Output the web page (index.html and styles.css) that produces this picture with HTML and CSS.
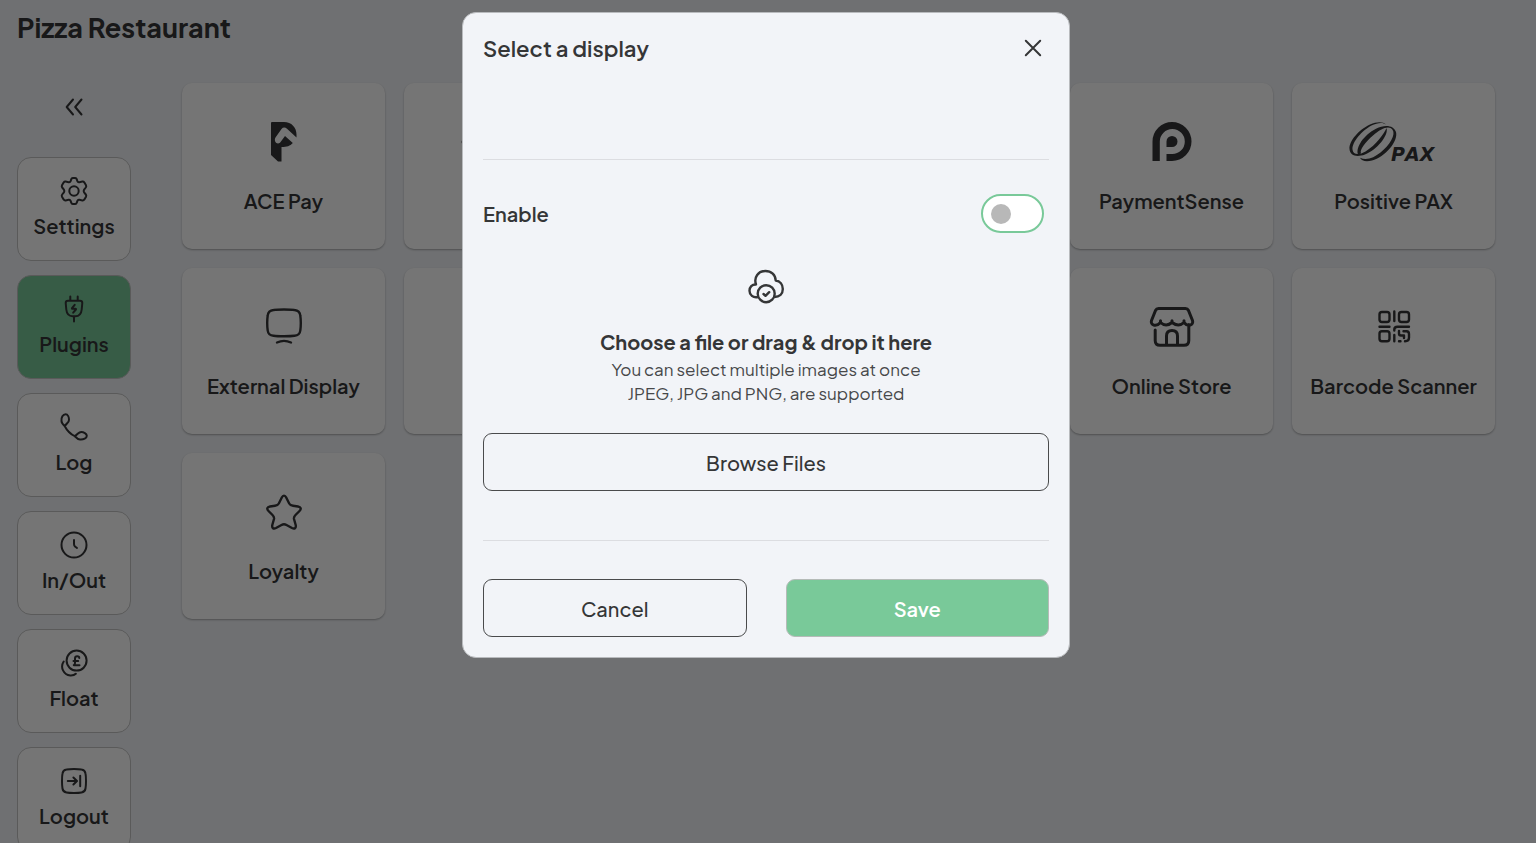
FILE: index.html
```html
<!DOCTYPE html>
<html lang="en">
<head>
<meta charset="utf-8">
<meta name="viewport" content="width=device-width, initial-scale=1">
<title>Pizza Restaurant</title>
<link rel="stylesheet" href="styles.css">
</head>
<body>
<div class="app">
  <header class="topbar"><h1 class="brand">Pizza Restaurant</h1></header>
  <div class="layout">
    <nav class="sidebar" aria-label="Main">
      <button class="collapse" type="button" aria-label="Collapse menu">
        <svg class="icon" width="20" height="20" viewBox="0 0 20 20"><path d="M9 2.500 2.700 10 9 17.500M17.500 2.500 11.200 10 17.500 17.500"/></svg>
      </button>
      <button class="nav-item" type="button">
        <svg class="icon" width="28" height="28" viewBox="0 0 28 28"><path d="M11.300 2.200Q11.600 1 12.800 1h2.400Q16.400 1 16.700 2.200L17.400 4.200Q17.900 5.500 19.300 5.200L22.400 4.600Q23.600 4.400 24.400 5.600L26 8.300Q26.600 9.500 25.800 10.500L24.100 12.600Q23.200 14 24.100 15.400L25.800 17.500Q26.600 18.500 26 19.700L24.400 22.400Q23.600 23.600 22.400 23.400L19.300 22.800Q17.900 22.500 17.400 23.800L16.700 25.800Q16.400 27 15.200 27H12.800Q11.600 27 11.300 25.800L10.600 23.800Q10.100 22.500 8.700 22.800L5.600 23.400Q4.400 23.600 3.600 22.400L2 19.700Q1.400 18.500 2.200 17.500L3.900 15.400Q4.800 14 3.900 12.600L2.200 10.500Q1.400 9.500 2 8.300L3.600 5.600Q4.400 4.400 5.600 4.600L8.700 5.200Q10.100 5.500 10.600 4.200Z"/><circle cx="14" cy="14" r="4.700"/></svg>
        <span>Settings</span>
      </button>
      <button class="nav-item nav-item-active" type="button" aria-current="page">
        <svg class="icon" width="28" height="28" viewBox="0 0 28 28"><path d="M10.300 1.500V5.500M17.700 1.500V5.500M14 21.500V26.500M8 5.800H20Q22.300 5.800 22.300 8L21.700 14.500Q21 21.200 15.500 21.200H12.500Q7 21.200 6.300 14.500L5.700 8Q5.700 5.800 8 5.800ZM14.700 9.800 12 13.200Q11.700 13.800 12.500 13.800H15.500Q16.300 13.800 15.900 14.500L13.200 17.700"/></svg>
        <span>Plugins</span>
      </button>
      <button class="nav-item" type="button">
        <svg class="icon" width="28" height="28" viewBox="0 0 28 28"><path d="M1.500 8C1 4.500 3 1.200 5.500 1.200C8 1.200 9 4.500 9 6.700C9 9.500 7 9.800 4.800 13.200C1.900 10.600 1.500 9.500 1.500 8ZM4.800 13.200C7 17.500 10.500 21 14.800 23.200C18.200 21 18.500 19 21.300 19C23.500 19 26.800 20.500 26.800 22.700C26.800 25.200 23.500 26.800 20 26.500C18 26.300 16.500 25 14.800 23.200"/></svg>
        <span>Log</span>
      </button>
      <button class="nav-item" type="button">
        <svg class="icon" width="28" height="28" viewBox="0 0 28 28"><circle cx="14" cy="14" r="12.500"/><path d="M14 9V13Q14 14.500 15 15.500L17 17"/></svg>
        <span>In/Out</span>
      </button>
      <button class="nav-item" type="button">
        <svg class="icon" width="28" height="28" viewBox="0 0 28 28"><circle cx="16.600" cy="11.600" r="10"/><path d="M3.700 12.500A9 9 0 0 0 10.300 26.500Q14 26.700 15.800 24.800M19.300 9Q19.300 7.200 17.200 7.200Q15 7.200 15 9.400V14Q15 15.700 13.800 16.200H19.500M13.500 11.900H18.200"/></svg>
        <span>Float</span>
      </button>
      <button class="nav-item" type="button">
        <svg class="icon" width="28" height="28" viewBox="0 0 28 28"><path d="M14 2Q19 2 21.500 2.500Q25 3 25.500 6.500Q26 9 26 14T25.500 21.500Q25 25 21.500 25.500Q19 26 14 26T6.500 25.500Q3 25 2.500 21.500Q2 19 2 14T2.500 6.500Q3 3 6.500 2.500Q9 2 14 2ZM7.800 14H16.500M13.400 10.500 17 14 13.400 17.500M20.200 8.800V19.200"/></svg>
        <span>Logout</span>
      </button>
    </nav>
    <main class="plugins">
      <button class="card" type="button">
        <svg class="logo" width="48" height="48" viewBox="0 0 48 48"><path d="M12 4H24C31.500 4 36.500 9.500 36.500 16.500V19.500L27 10.800C25 9 23 9.300 21.500 11L15.500 19.500C13.500 23 16.500 27 20 24.800L25 18L32.800 25C30 28 27 29 21.500 29V43.500H18L11 37V5Q11 4 12 4Z"/></svg>
        <span>ACE Pay</span>
      </button>
      <button class="card" type="button" aria-label="Plugin">
        <svg class="icon icon-bold" width="92" height="48" viewBox="0 0 92 48"><ellipse cx="46" cy="24" rx="43" ry="12"/></svg>
      </button>
      <button class="card" type="button" aria-label="Plugin"></button>
      <button class="card" type="button" aria-label="Plugin"></button>
      <button class="card" type="button">
        <svg class="logo" width="48" height="48" viewBox="0 0 48 48"><path d="M4.500 43V23.500A19.500 19.500 0 1 1 24 43H18.500V36H24A12.500 12.500 0 1 0 11.800 23.500V43ZM18.500 29V23.500A5.500 5.500 0 1 1 24 29Z"/></svg>
        <span>PaymentSense</span>
      </button>
      <button class="card" type="button">
        <svg class="logo" width="92" height="48" viewBox="0 0 92 48"><path d="M38 6.500C35 3.500 29 3.200 22 6.500C11 11.500 1 23 1.500 31C2 38 9 39.500 17 36.500C29 32 41 17 38.500 10C36 16 28 27 17.500 33.500C11 37.300 5 37 4.500 31.500C4 24 14 12.500 23.500 7.500C29.500 4.500 35 4 38 6.500Z"/><path d="M10 36.500C7.500 29 16 17 28 10.800C37 6 46 7.500 48 14C50.500 23.500 37 39 24 42.500C18 44 13.500 43 12 39.800C19 43 26 39.500 32.500 34.500C42 27 48 16.500 44.500 11.800C41 7 33 10.500 25 17.500C17 24.500 11.500 31.500 13 35.500Z"/><text class="logo-word" x="43" y="43">PAX</text></svg>
        <span>Positive PAX</span>
      </button>
      <button class="card" type="button">
        <svg class="icon icon-medium" width="48" height="48" viewBox="0 0 48 48"><path d="M24 6.500Q31 6.500 34.500 7Q39.800 7.500 40.300 12.500Q40.800 16 40.800 20T40.300 27.500Q39.800 32.300 34.500 32.800Q31 33.300 24 33.300T13.500 32.800Q8.200 32.300 7.700 27.500Q7.200 24 7.200 20T7.700 12.500Q8.200 7.500 13.500 7Q17 6.500 24 6.500ZM17 39.500Q24 36.200 31 39.500"/></svg>
        <span>External Display</span>
      </button>
      <button class="card" type="button" aria-label="Plugin"></button>
      <button class="card" type="button" aria-label="Plugin"></button>
      <button class="card" type="button" aria-label="Plugin"></button>
      <button class="card" type="button">
        <svg class="icon icon-bold" width="48" height="48" viewBox="0 0 48 48"><path d="M7.200 27V37.500Q7.200 42.300 12 42.300H36Q40.800 42.300 40.800 37.500V21.500M18.500 42V33Q18.500 27.500 24 27.500T29.500 33V42M10.500 5.500H37.500Q39.500 5.500 40.500 7.500L44.500 17.500C46 22 40 24.500 36 19.500Q30.500 24.500 24 19.500Q18 24.500 12.500 19.500C8 24.500 2 22 3.500 17.500L7.500 7.500Q8.500 5.500 10.500 5.500ZM12.500 17.700V19.500M24 17.700V19.500M36 17.700V19.500"/></svg>
        <span>Online Store</span>
      </button>
      <button class="card" type="button">
        <svg class="icon icon-medium" width="48" height="48" viewBox="0 0 48 48"><rect x="9.500" y="9" width="10" height="10" rx="2.500"/><rect x="29" y="9" width="10" height="10" rx="2.500"/><rect x="9.500" y="28.200" width="10" height="10" rx="2.500"/><path d="M24.300 8.500V18M9.500 23.700H19.500M24.300 27.500V26.500Q24.300 23.700 27.500 23.700H39M24.300 32V38.200M29 28V30.500Q29 32.500 31 32.500H34V35M33.500 28.300H36.500Q39 28.300 39 31V34.500Q39 38.200 35 38.200M29 38.200H30.500"/></svg>
        <span>Barcode Scanner</span>
      </button>
      <button class="card" type="button">
        <svg class="icon icon-medium" width="48" height="48" viewBox="0 0 48 48"><path d="M21.800 9.500C23 7 25 7 26.200 9.500L29.200 15.500C30 17 31 17.500 33 17.700L38 18.500C41 19 41.500 21 39.500 23L35.500 27C34 28.500 33.700 29.500 34 31L35.700 37C36.300 40.300 34.500 41.200 32 40L26.500 37C24.700 36 23.300 36 21.500 37L16 40C13.500 41.200 11.700 40.300 12.300 37L14 31C14.300 29.500 14 28.500 12.500 27L8.500 23C6.500 21 7 19 10 18.500L15 17.700C17 17.500 18 17 18.800 15.500Z"/></svg>
        <span>Loyalty</span>
      </button>
    </main>
  </div>
</div>

<div class="overlay">
  <form class="modal" role="dialog" aria-modal="true" aria-labelledby="modal-title">
    <div class="modal-head">
      <h2 class="modal-title" id="modal-title">Select a display</h2>
      <button class="close" type="button" aria-label="Close">
        <svg class="icon" width="18" height="18" viewBox="0 0 18 18"><path d="M1.800 1.800 16.200 16.200M16.200 1.800 1.800 16.200"/></svg>
      </button>
    </div>
    <div class="enable-row">
      <label class="enable-label" for="enable">Enable</label>
      <input class="toggle" id="enable" type="checkbox" role="switch">
    </div>
    <div class="dropzone">
      <svg class="icon icon-medium" width="36" height="36" viewBox="0 0 36 36"><circle cx="18.200" cy="24.700" r="8.500"/><path d="M10 28C5 29 1.500 26 1.500 21.800C1.500 18 4 15.300 8 15.500C5.500 8 10.500 2 17.300 2C23.500 2 27.500 6 27.700 11.500C32 12 34.800 15.500 34.800 20C34.800 25 31.500 28 26.400 28M15.500 25 17.500 26.800 21.200 23.200"/></svg>
      <p class="drop-title">Choose a file or drag &amp; drop it here</p>
      <p class="drop-note">You can select multiple images at once<br>JPEG, JPG and PNG, are supported</p>
      <button class="btn btn-wide" type="button">Browse Files</button>
    </div>
    <div class="modal-foot">
      <button class="btn" type="button">Cancel</button>
      <button class="btn btn-primary" type="submit">Save</button>
    </div>
  </form>
</div>
</body>
</html>
```
FILE: styles.css
```css
:root {
  --ink: #353637;
  --page: #f2f4f8;
  --green: #79c999;
}

* {
  box-sizing: border-box;
}

body {
  margin: 0;
  background: var(--page);
  color: var(--ink);
  font-family: "Plus Jakarta Sans", Inter, "Open Sans", sans-serif;
  font-size: 20px;
}

button {
  padding: 0;
  border: 0;
  background: none;
  color: inherit;
  font: inherit;
  cursor: pointer;
}

h1, h2, p {
  margin: 0;
}

.app {
  height: 100vh;
  overflow: hidden;
}

.topbar {
  padding: 9px 17px 11px;
}

.brand {
  font-size: 27px;
  line-height: 36px;
  font-weight: 700;
}

.layout {
  display: flex;
  gap: 51px;
  padding: 27px 41px 0 17px;
}

.sidebar {
  flex: none;
  width: 114px;
  display: flex;
  flex-direction: column;
  gap: 14px;
}

.collapse {
  display: grid;
  place-items: center;
  height: 48px;
  margin-bottom: 12px;
}

.nav-item {
  display: flex;
  flex-direction: column;
  align-items: center;
  gap: 9px;
  padding: 19px 0 22px;
  border: 1px solid #c4c4c4;
  border-radius: 14px;
  background: #fff;
  font-weight: 600;
  line-height: 24px;
}

.nav-item-active {
  background: var(--green);
}

.plugins {
  flex: 1;
  display: grid;
  grid-template-columns: repeat(6, minmax(0, 1fr));
  grid-auto-rows: 166px;
  gap: 19px;
}

.card {
  display: flex;
  flex-direction: column;
  align-items: center;
  gap: 21px;
  padding-top: 35px;
  border-radius: 10px;
  background: #fff;
  box-shadow: 0 1px 2px rgba(0, 0, 0, .3);
  font-weight: 600;
  line-height: 28px;
}

.icon {
  display: block;
  fill: none;
  stroke: currentColor;
  stroke-width: 2;
  stroke-linecap: round;
  stroke-linejoin: round;
}

.icon-medium {
  stroke-width: 2.4;
}

.icon-bold {
  stroke-width: 3;
}

.logo {
  display: block;
  fill: currentColor;
  overflow: visible;
}

.logo-word {
  font: italic bold 19px "DejaVu Sans", sans-serif;
  font-kerning: none;
}

.overlay {
  position: fixed;
  inset: 0;
  display: flex;
  justify-content: center;
  align-items: flex-start;
  padding: 12px 4px 12px 0;
  background: rgba(0, 0, 0, .54);
  overflow: auto;
}

.modal {
  width: 608px;
  max-width: 100%;
  padding: 19px 20px 20px;
  border: 1px solid #b9bbbe;
  border-radius: 14px;
  background: var(--page);
}

.modal-head {
  display: flex;
  justify-content: space-between;
  align-items: center;
  padding-bottom: 95px;
  border-bottom: 1px solid #dcdde1;
}

.modal-title {
  font-size: 22px;
  line-height: 32px;
  font-weight: 600;
}

.close {
  display: grid;
  place-items: center;
  width: 32px;
  height: 32px;
}

.enable-row {
  display: flex;
  justify-content: space-between;
  align-items: center;
  padding: 34px 5px 36px 0;
}

.enable-label {
  font-weight: 600;
}

.toggle {
  appearance: none;
  display: flex;
  align-items: center;
  width: 63px;
  height: 39px;
  margin: 0;
  padding-left: 8px;
  border: 2px solid var(--green);
  border-radius: 20px;
  background: #fff;
}

.toggle::before {
  content: "";
  width: 20px;
  height: 20px;
  border-radius: 50%;
  background: #b8b8b8;
}

.toggle:checked {
  justify-content: flex-end;
  padding: 0 8px 0 0;
}

.toggle:checked::before {
  background: var(--green);
}

.dropzone {
  display: flex;
  flex-direction: column;
  align-items: center;
  padding-bottom: 49px;
  border-bottom: 1px solid #dcdde1;
  text-align: center;
}

.drop-title {
  margin-top: 23px;
  line-height: 28px;
  font-weight: 700;
}

.drop-note {
  margin: 1px 0 28px;
  color: #47484a;
  font-size: 17px;
  line-height: 24px;
}

.btn {
  flex: 1;
  height: 58px;
  border: 1px solid #4a4b4c;
  border-radius: 9px;
  font-weight: 500;
}

.btn-wide {
  flex: none;
  width: 100%;
}

.btn-primary {
  border-color: #b5bbb8;
  background: var(--green);
  color: #fff;
  font-weight: 600;
}

.modal-foot {
  display: flex;
  gap: 39px;
  padding-top: 38px;
}
```
